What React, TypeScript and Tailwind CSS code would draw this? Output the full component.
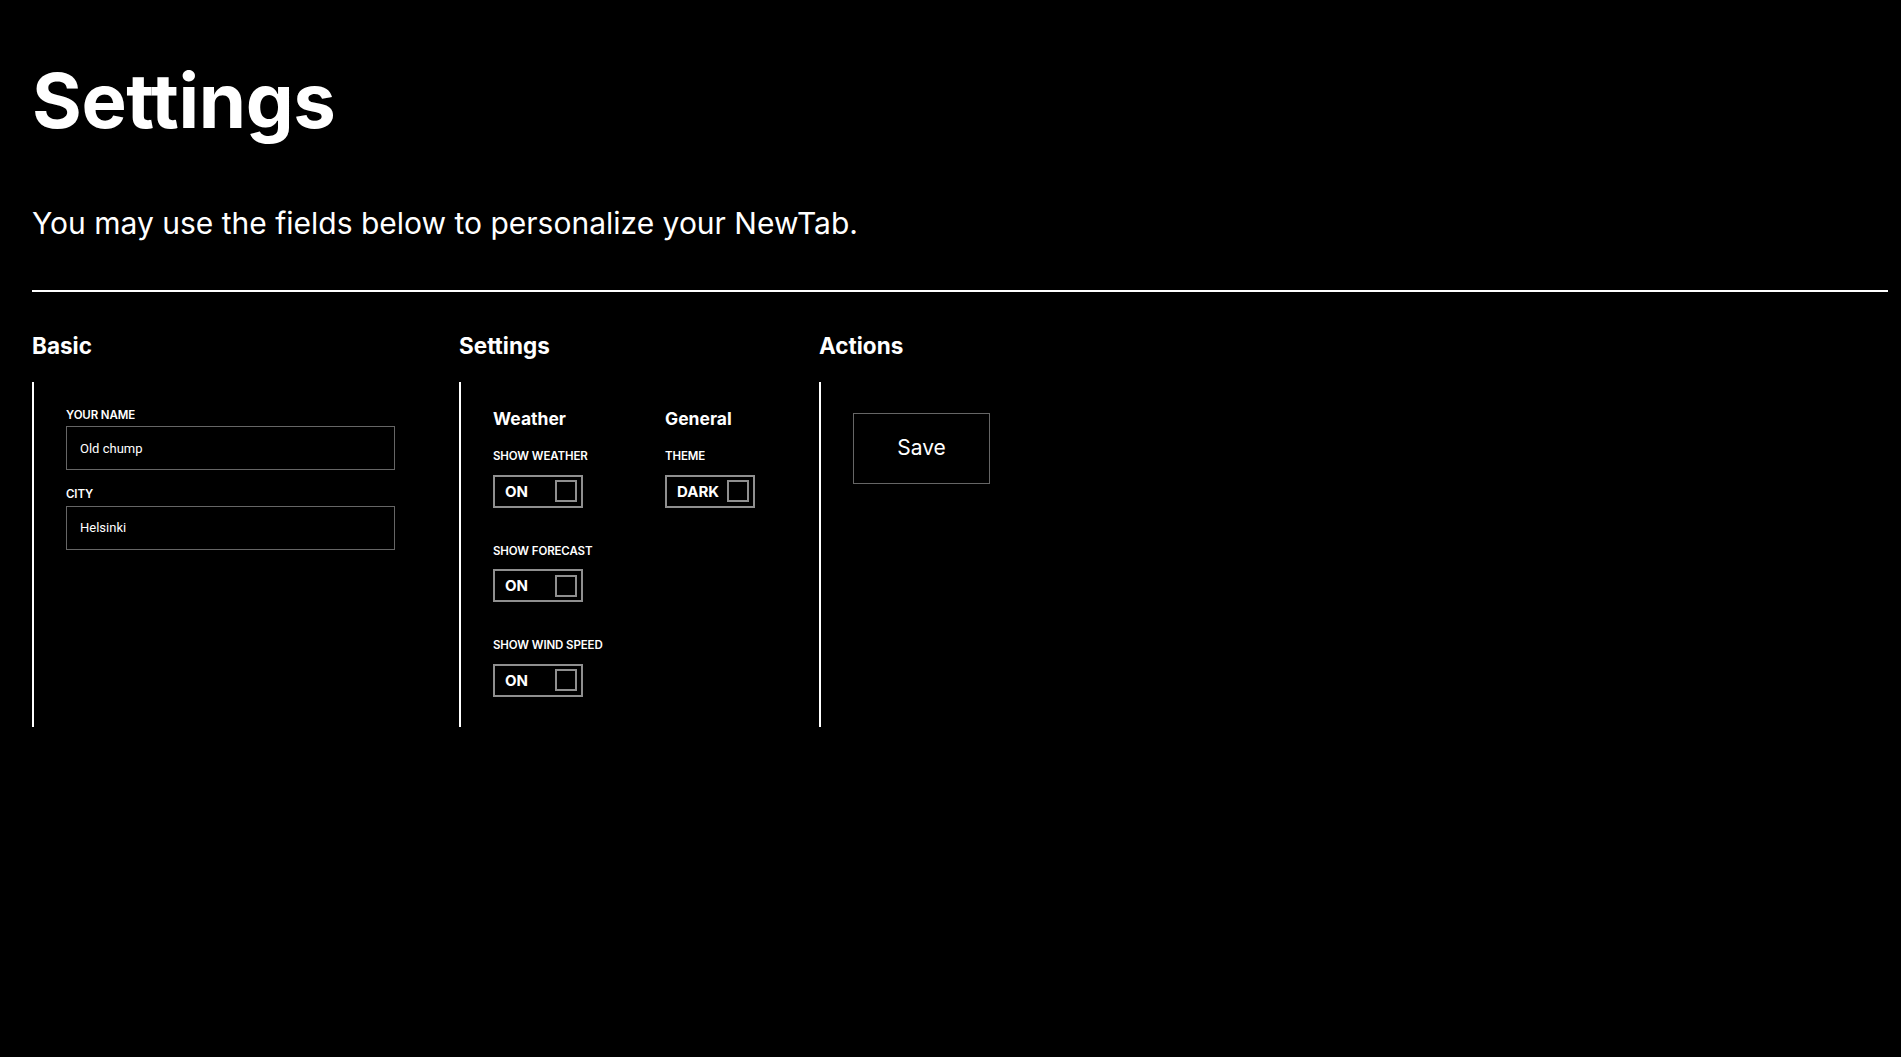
import React, { useState } from "react"

const font = { fontFamily: "Inter, 'Noto Sans', sans-serif" }

function Label({ children }: { children: React.ReactNode }) {
  return (
    <div className="text-[11.5px] leading-none font-semibold uppercase whitespace-nowrap tracking-[-0.01em]">
      {children}
    </div>
  )
}

function TextField({ label, value }: { label: string; value: string }) {
  const [v, setV] = useState(value)
  return (
    <div>
      <Label>{label}</Label>
      <input
        value={v}
        onChange={(e) => setV(e.target.value)}
        className="mt-[5px] block w-[329px] h-[44px] bg-black border border-[#666] pl-[13px] text-[13px] text-white outline-none"
        style={{ fontFamily: "Roboto, 'Liberation Sans', sans-serif" }}
      />
    </div>
  )
}

function Toggle({ text }: { text: string }) {
  const [checked, setChecked] = useState(false)
  return (
    <button
      onClick={() => setChecked(!checked)}
      className="flex items-center justify-between w-[90px] h-[33px] border-2 border-[#8f8f8f] pl-[10px] pr-[4px] text-[15px] font-bold leading-none"
    >
      <span>{text}</span>
      <span className="flex items-center justify-center w-[22px] h-[22px] border-2 border-[#8f8f8f]">
        {checked && <span className="w-[10px] h-[10px] bg-white" />}
      </span>
    </button>
  )
}

function Column({ title, children, className = "" }: { title: string; children: React.ReactNode; className?: string }) {
  return (
    <div className="flex flex-col">
      <h2 className="text-[22.5px] leading-none font-bold mb-[24px]">{title}</h2>
      <div className={"flex-1 border-l-2 border-white pl-8 " + className}>{children}</div>
    </div>
  )
}

export default function App() {
  return (
    <div className="min-h-screen bg-black text-white px-8 pt-[62px]" style={font}>
      <h1 className="text-[76px] leading-none font-bold tracking-[-0.005em]">Settings</h1>
      <p className="mt-[70px] text-[30px] leading-none">
        You may use the fields below to personalize your NewTab.
      </p>
      <div className="mt-[52px] h-[2px] w-[1856px] bg-white" />

      <div className="mt-[43px] flex gap-16">
        <Column title="Basic" className="pt-[28px]">
          <TextField label="Your name" value="Old chump" />
          <div className="mt-[19px]">
            <TextField label="City" value="Helsinki" />
          </div>
        </Column>

        <Column title="Settings" className="pt-[28px] pb-[30px]">
          <div className="flex gap-16">
            <div className="w-[108px]">
              <h3 className="text-[17.5px] leading-none font-bold">Weather</h3>
              <div className="mt-[24px]">
                <Label>Show weather</Label>
                <div className="mt-[12px]">
                  <Toggle text="ON" />
                </div>
              </div>
              <div className="mt-[38px]">
                <Label>Show forecast</Label>
                <div className="mt-[12px]">
                  <Toggle text="ON" />
                </div>
              </div>
              <div className="mt-[38px]">
                <Label>Show wind speed</Label>
                <div className="mt-[12px]">
                  <Toggle text="ON" />
                </div>
              </div>
            </div>
            <div>
              <h3 className="text-[17.5px] leading-none font-bold">General</h3>
              <div className="mt-[24px]">
                <Label>Theme</Label>
                <div className="mt-[12px]">
                  <Toggle text="DARK" />
                </div>
              </div>
            </div>
          </div>
        </Column>

        <Column title="Actions" className="pt-[31px]">
          <button className="w-[137px] h-[71px] border border-[#666] text-[21px]">Save</button>
        </Column>
      </div>
    </div>
  )
}
